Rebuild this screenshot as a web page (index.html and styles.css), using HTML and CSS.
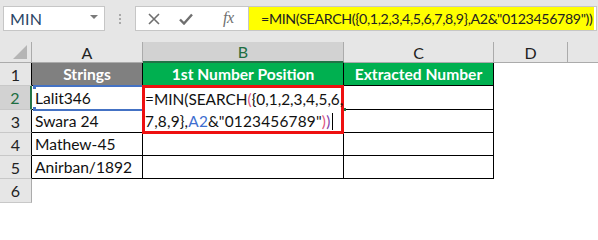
FILE: index.html
```html
<!DOCTYPE html>
<html>
<head>
<meta charset="utf-8">
<link rel="stylesheet" href="styles.css">
</head>
<body>
<div class="app">
  <div class="toolbar">
    <div class="namebox"><span class="nb-text">MIN</span><span class="nb-arrow"></span></div>
    <div class="sep"><span class="dot"></span><span class="dot"></span><span class="dot"></span></div>
    <div class="fxbox">
      <svg class="ic ic-x" width="12" height="12" viewBox="0 0 12 12"><path d="M1 1L11 11M11 1L1 11" stroke="#6f6f6f" stroke-width="1.6" fill="none"/></svg>
      <svg class="ic ic-check" width="14" height="12" viewBox="0 0 14 12"><path d="M1 6.5L5 10.5L13 1.5" stroke="#6f6f6f" stroke-width="2.4" fill="none"/></svg>
      <span class="ic ic-fx">fx</span>
    </div>
    <div class="formula-wrap"><div class="formula">=MIN(SEARCH({0,1,2,3,4,5,6,7,8,9},A2&amp;"0123456789"))</div></div>
  </div>

  <div class="sheet">
    <div class="corner"><svg width="16" height="16" viewBox="0 0 16 16"><polygon points="15,1 15,15 1,15" fill="#b5b5b5"/></svg></div>
    <div class="colhdr">A</div>
    <div class="colhdr sel">B</div>
    <div class="colhdr">C</div>
    <div class="colhdr">D</div>
    <div class="colhdr last"></div>

    <div class="rowhdr tb">1</div>
    <div class="cell t hdr-gray">Strings</div>
    <div class="cell t hdr-green">1st Number Position</div>
    <div class="cell t hdr-green">Extracted Number</div>
    <div class="cell"></div>
    <div class="cell"></div>

    <div class="rowhdr sel">2</div>
    <div class="cell t">Lalit346</div>
    <div class="cell t"></div>
    <div class="cell t"></div>
    <div class="cell"></div>
    <div class="cell"></div>

    <div class="rowhdr tb">3</div>
    <div class="cell t">Swara 24</div>
    <div class="cell t"></div>
    <div class="cell t"></div>
    <div class="cell"></div>
    <div class="cell"></div>

    <div class="rowhdr tb">4</div>
    <div class="cell t">Mathew-45</div>
    <div class="cell t"></div>
    <div class="cell t"></div>
    <div class="cell"></div>
    <div class="cell"></div>

    <div class="rowhdr tb">5</div>
    <div class="cell t">Anirban/1892</div>
    <div class="cell t"></div>
    <div class="cell t"></div>
    <div class="cell"></div>
    <div class="cell"></div>

    <div class="rowhdr">6</div>
    <div class="cell"></div>
    <div class="cell"></div>
    <div class="cell"></div>
    <div class="cell"></div>
    <div class="cell"></div>
  </div>

  <div class="refbox"></div>
  <div class="editbox">
    <div class="eline">=MIN(SEARCH<span class="p1">(</span>{0,1,2,3,4,5,6,</div>
    <div class="eline l2">7,8,9},<span class="ref">A2</span>&amp;"0123456789"<span class="p1">)</span><span class="p2">)</span><span class="caret"></span></div>
  </div>
  <div class="handle"></div>
</div>
</body>
</html>
```

FILE: styles.css
```css
html, body {
  margin: 0;
  padding: 0;
  background: #ffffff;
}
body {
  font-family: "Lato", "Open Sans", sans-serif;
  width: 598px;
  height: 203px;
  overflow: hidden;
}
.app {
  position: relative;
  width: 598px;
  height: 203px;
}
.toolbar {
  box-sizing: border-box;
  height: 42px;
  background: #e6e6e6;
  display: flex;
  padding: 6px 1px 11px 3px;
}
.namebox {
  box-sizing: border-box;
  width: 102px;
  background: #fff;
  border: 1px solid #c6c6c6;
  display: flex;
  align-items: center;
  justify-content: space-between;
  padding: 0 6px 0 6px;
}
.nb-text {
  font-size: 16px;
  color: #2a4565;
  letter-spacing: 0.2px;
}
.nb-arrow {
  width: 0;
  height: 0;
  border-left: 4px solid transparent;
  border-right: 4px solid transparent;
  border-top: 4px solid #7a7a7a;
  margin-top: -4px;
}
.sep {
  width: 30px;
  display: flex;
  flex-direction: column;
  align-items: center;
  justify-content: center;
  gap: 2px;
}
.dot {
  width: 2px;
  height: 2px;
  background: #a9a9a9;
}
.fxbox {
  box-sizing: border-box;
  width: 113px;
  background: #fff;
  border: 1px solid #c6c6c6;
  border-right: none;
  display: flex;
  align-items: center;
  padding-left: 12px;
}
.ic-x { margin-right: 19px; }
.ic-check { margin-right: 30px; margin-top: 1px; }
.ic-fx {
  font-family: "Liberation Serif", "DejaVu Serif", serif;
  font-style: italic;
  font-size: 16px;
  color: #6f6f6f;
  letter-spacing: -0.5px;
  margin-top: -2px;
}
.formula-wrap {
  flex: 1;
  box-sizing: border-box;
  background: #fff;
  border: 1px solid #c6c6c6;
  display: flex;
}
.formula {
  width: 345px;
  background: #ffff00;
  font-size: 14.2px;
  letter-spacing: -0.35px;
  color: #222;
  padding-left: 12px;
  box-sizing: border-box;
  display: flex;
  align-items: center;
  white-space: nowrap;
  overflow: hidden;
}

.sheet {
  display: grid;
  grid-template-columns: 32px 111px 201px 150px 74px 30px;
  grid-template-rows: 21px 23px 24px 23px 23px 23px 24px;
}
.sheet > div {
  box-sizing: border-box;
  display: flex;
  align-items: center;
  overflow: hidden;
  white-space: nowrap;
}
.corner {
  background: #e6e6e6;
  border-right: 1px solid #ababab;
  border-bottom: 1px solid #ababab;
  justify-content: flex-end;
  padding-right: 3px;
  align-items: flex-end !important;
  padding-bottom: 2px;
}
.corner svg { display: block; }
.colhdr {
  background: #e6e6e6;
  border-right: 1px solid #ababab;
  border-bottom: 1px solid #ababab;
  justify-content: center;
  font-size: 16px;
  color: #222;
}
.colhdr.sel {
  background: #d2d2d2;
  color: #1e6e42;
  border-bottom: 2px solid #217346;
}
.colhdr.last { border-right: none; }
.rowhdr {
  background: #e6e6e6;
  border-right: 1px solid #ababab;
  border-bottom: 1px solid #c8c8c8;
  justify-content: center;
  font-size: 16px;
  color: #222;
}
.rowhdr.tb { border-right-color: #000; }
.rowhdr.sel {
  background: #d2d2d2;
  color: #1e6e42;
  border-right: 2px solid #217346;
}
.cell {
  background: #fff;
  font-size: 15.6px;
  color: #111;
  padding-left: 3px;
}
.cell.t {
  border-right: 1px solid #000;
  border-bottom: 1px solid #000;
}
.hdr-gray, .hdr-green {
  font-weight: 700;
  color: #fff;
  justify-content: center;
  padding-left: 0;
}
.hdr-gray { background: #808080; }
.hdr-green { background: #00b050; }

.refbox {
  position: absolute;
  left: 33px;
  top: 85px;
  width: 110px;
  height: 26px;
  box-sizing: border-box;
  border-top: 2px solid #4472c4;
  border-bottom: 2px solid #4472c4;
}
.refbox::before, .refbox::after {
  content: "";
  position: absolute;
  left: 0;
  width: 3px;
  height: 4px;
  background: #4472c4;
}
.refbox::before { top: -2px; }
.refbox::after { bottom: -2px; }

.editbox {
  position: absolute;
  left: 142px;
  top: 85px;
  width: 202px;
  height: 49px;
  box-sizing: border-box;
  border: 3px solid #ee1010;
  background: #fff;
  font-size: 15.4px;
  color: #111;
  padding-left: 0;
}
.eline {
  height: 22px;
  line-height: 22px;
  white-space: nowrap;
  display: flex;
  align-items: center;
}
.eline.l2 { letter-spacing: 0.2px; }
.p1 { color: #e0567f; }
.p2 { color: #8a3fa8; }
.ref { color: #3f6fd0; }
.caret {
  display: inline-block;
  width: 1px;
  height: 17px;
  background: #000;
  margin-left: 2px;
}
.handle {
  position: absolute;
  left: 344px;
  top: 108px;
  width: 2px;
  height: 3px;
  background: #217346;
}
```
